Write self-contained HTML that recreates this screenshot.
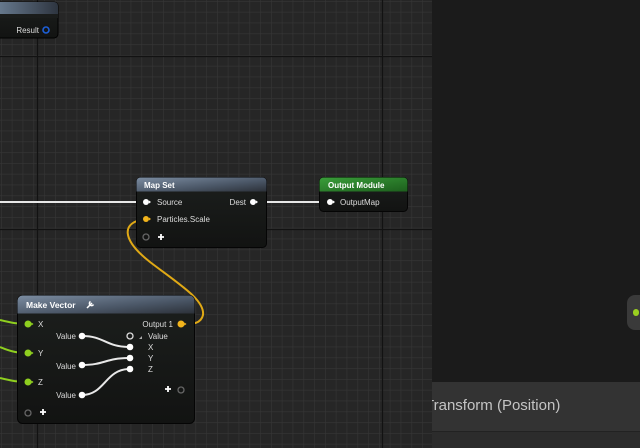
<!DOCTYPE html>
<html><head><meta charset="utf-8"><style>
html,body{margin:0;padding:0;width:640px;height:448px;overflow:hidden;background:#262626;}
svg{position:absolute;left:0;top:0}
text{font-family:"Liberation Sans",sans-serif;}
#panel{position:absolute;left:432px;top:0;width:208px;height:448px;background:#1b1b1b;overflow:hidden}
#sec{position:absolute;left:0;top:382px;width:208px;height:49px;background:#333;border-bottom:1px solid #222}
#sec span{position:absolute;left:-7px;top:15px;font:15px "Liberation Sans",sans-serif;color:#c4c4c4;white-space:nowrap}
#below{position:absolute;left:0;top:432px;width:208px;height:16px;background:#2c2c2c}
#pn{position:absolute;left:195px;top:295px;width:30px;height:35px;border-radius:8px;background:#3a3a3a}
#pn i{position:absolute;left:6px;top:14px;width:6px;height:7px;border-radius:3px;background:#9ad020}
</style></head><body>
<svg width="640" height="448" viewBox="0 0 640 448">
<defs>
<pattern id="g" x="1" y="1" width="10.8" height="10.8" patternUnits="userSpaceOnUse">
<path d="M0 0H10.8M0 0V10.8" stroke="#363636" stroke-width="1.2" fill="none"/>
</pattern>
<linearGradient id="hb" x1="0" y1="0" x2="1" y2="1"><stop offset="0" stop-color="#7c8da2"/><stop offset="0.6" stop-color="#4a5666"/><stop offset="1" stop-color="#2c3139"/></linearGradient>
<linearGradient id="hb2" x1="0" y1="0" x2="1" y2="0"><stop offset="0" stop-color="#6f8399"/><stop offset="1" stop-color="#2e3540"/></linearGradient>
<linearGradient id="hg" x1="0" y1="0" x2="1" y2="1"><stop offset="0" stop-color="#3a9e3a"/><stop offset="1" stop-color="#1d5f1d"/></linearGradient>
<linearGradient id="bd" x1="0" y1="0" x2="0" y2="1"><stop offset="0" stop-color="#1c1f1d"/><stop offset="1" stop-color="#121312"/></linearGradient>
</defs>
<rect width="640" height="448" fill="#262626"/>
<rect width="640" height="448" fill="url(#g)"/>
<path d="M37.5 0V448M0 229.5H640M0 56.5H640M382.5 0V448" stroke="#121212" stroke-width="1.2"/>

<path d="M0 202H145M256 202H328" stroke="#e8e8e8" stroke-width="2"/>
<path d="M146 219C120 222 122 240 150 262C180 285 205 300 203 315C201 324 192 324 184 324" stroke="#e0a915" stroke-width="2" fill="none"/>
<path d="M0 320C12 323 18 324 28 324M0 347C12 352 18 353 28 353M0 378C12 381 18 382 28 382" stroke="#8fcf1f" stroke-width="2" fill="none"/>

<rect x="-10" y="2" width="68" height="36" rx="4" fill="url(#bd)" stroke="#000" />
<rect x="-10" y="2" width="68" height="16" rx="4" fill="url(#hb2)"/>
<rect x="-10" y="14" width="68" height="4" fill="#1a1c1b"/>
<text x="39" y="33" font-size="8" fill="#ddd" text-anchor="end">Result</text>
<circle cx="46" cy="30" r="3" fill="none" stroke="#1d5fd8" stroke-width="1.6"/>

<rect x="136.5" y="177.5" width="130" height="70" rx="4" fill="url(#bd)" stroke="#050505"/>
<path d="M140.5 177.5H262.5A4 4 0 0 1 266.5 181.5V191.5H136.5V181.5A4 4 0 0 1 140.5 177.5Z" fill="url(#hb)"/>
<text x="144" y="188" font-size="8" font-weight="bold" fill="#fff">Map Set</text>
<circle cx="146" cy="202" r="3" fill="#fff"/><path d="M149 200.5L151 202L149 203.5Z" fill="#fff"/>
<text x="157" y="205" font-size="8" fill="#ddd">Source</text>
<text x="246" y="205" font-size="8" fill="#ddd" text-anchor="end">Dest</text>
<circle cx="253" cy="202" r="3" fill="#fff"/><path d="M256 200.5L258 202L256 203.5Z" fill="#fff"/>
<circle cx="146" cy="219" r="3" fill="#f2b41c"/><path d="M149 217.5L151 219L149 220.5Z" fill="#f2b41c"/>
<text x="157" y="222" font-size="8" fill="#ddd">Particles.Scale</text>
<circle cx="146" cy="237" r="3" fill="none" stroke="#666" stroke-width="1.3"/>
<path d="M158 237H164M161 234V240" stroke="#fff" stroke-width="1.8"/>

<rect x="319.5" y="177.5" width="88" height="34" rx="4" fill="url(#bd)" stroke="#050505"/>
<path d="M323.5 177.5H403.5A4 4 0 0 1 407.5 181.5V191.5H319.5V181.5A4 4 0 0 1 323.5 177.5Z" fill="url(#hg)"/>
<text x="328" y="188" font-size="8" font-weight="bold" fill="#fff">Output Module</text>
<circle cx="330" cy="202" r="3" fill="#fff"/><path d="M333 200.5L335 202L333 203.5Z" fill="#fff"/>
<text x="340" y="205" font-size="8" fill="#ddd">OutputMap</text>

<rect x="17.5" y="295.5" width="177" height="128" rx="5" fill="url(#bd)" stroke="#050505"/>
<path d="M22.5 295.5H189.5A5 5 0 0 1 194.5 300.5V313.5H17.5V300.5A5 5 0 0 1 22.5 295.5Z" fill="url(#hb)"/>
<text x="26" y="308" font-size="8.5" font-weight="bold" fill="#fff">Make Vector</text>
<path d="M87 308L92 303M90.5 301.5A2.2 2.2 0 1 0 93.5 304.5" stroke="#fff" stroke-width="1.5" fill="none"/>
<circle cx="28" cy="324" r="3.5" fill="#8fcf1f"/><path d="M31.5 322.5L33.5 324L31.5 325.5Z" fill="#8fcf1f"/>
<text x="38" y="327" font-size="8" fill="#ddd">X</text>
<circle cx="28" cy="353" r="3.5" fill="#8fcf1f"/><path d="M31.5 351.5L33.5 353L31.5 354.5Z" fill="#8fcf1f"/>
<text x="38" y="356" font-size="8" fill="#ddd">Y</text>
<circle cx="28" cy="382" r="3.5" fill="#8fcf1f"/><path d="M31.5 380.5L33.5 382L31.5 383.5Z" fill="#8fcf1f"/>
<text x="38" y="385" font-size="8" fill="#ddd">Z</text>
<circle cx="28" cy="413" r="3" fill="none" stroke="#666" stroke-width="1.3"/>
<path d="M40 412H46M43 409V415" stroke="#fff" stroke-width="1.8"/>
<text x="173" y="327" font-size="8" fill="#ddd" text-anchor="end">Output 1</text>
<circle cx="181" cy="324" r="3.5" fill="#f2b41c"/><path d="M184.5 322.5L186.5 324L184.5 325.5Z" fill="#f2b41c"/>
<text x="76" y="339" font-size="8" fill="#ddd" text-anchor="end">Value</text>
<text x="76" y="369" font-size="8" fill="#ddd" text-anchor="end">Value</text>
<text x="76" y="398" font-size="8" fill="#ddd" text-anchor="end">Value</text>
<path d="M82 336C105 336 105 347 130 347M82 365C105 365 105 358 130 358M82 395C105 395 105 369 130 369" stroke="#e8e8e8" stroke-width="2" fill="none"/>
<circle cx="82" cy="336" r="3.3" fill="#fff"/><circle cx="82" cy="365" r="3.3" fill="#fff"/><circle cx="82" cy="395" r="3.3" fill="#fff"/>
<circle cx="130" cy="336" r="3" fill="none" stroke="#ddd" stroke-width="1.3"/>
<circle cx="130" cy="347" r="3.3" fill="#fff"/><circle cx="130" cy="358" r="3.3" fill="#fff"/><circle cx="130" cy="369" r="3.3" fill="#fff"/>
<path d="M139 339L142 336V339Z" fill="#aaa"/>
<text x="148" y="339" font-size="8" fill="#ddd">Value</text>
<text x="148" y="350" font-size="8" fill="#ddd">X</text>
<text x="148" y="361" font-size="8" fill="#ddd">Y</text>
<text x="148" y="372" font-size="8" fill="#ddd">Z</text>
<path d="M165 389H171M168 386V392" stroke="#fff" stroke-width="1.8"/>
<circle cx="181" cy="390" r="3" fill="none" stroke="#666" stroke-width="1.3"/>
</svg>
<div id="panel"><div id="pn"><i></i></div><div id="sec"><span>Transform (Position)</span></div><div id="below"></div></div>
</body></html>
